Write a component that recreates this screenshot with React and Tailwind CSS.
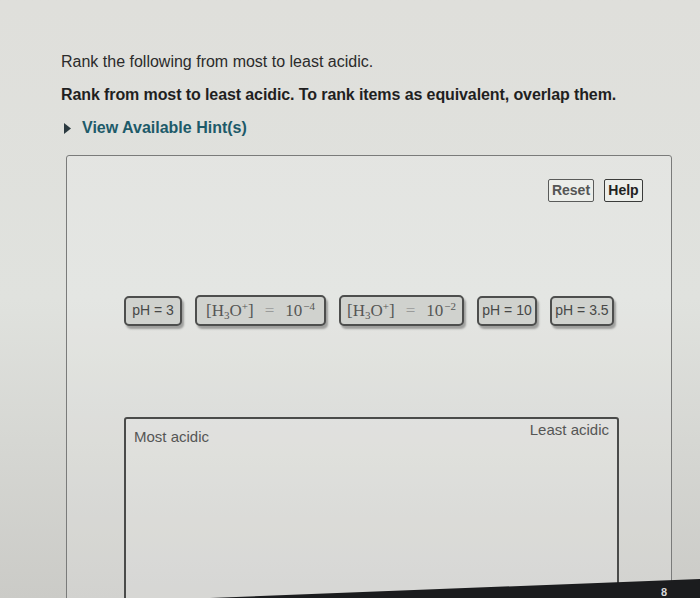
const sans = { fontFamily: '"Liberation Sans", Arial, sans-serif' };

function PhTile({ value, width }) {
  return (
    <div className={`flex h-[30px] ${width} items-center justify-center rounded-[5px] border-2 border-[#4d4e4d] bg-[#d0d2ce] text-[14px] text-[#474847] shadow-[2px_3px_2px_rgba(0,0,0,0.3)]`}>
      pH = {value}
    </div>
  );
}

function ConcTile({ exp, width }) {
  return (
    <div
      className={`flex h-[31px] ${width} items-center justify-center rounded-[5px] border-2 border-[#4d4e4d] bg-[#d0d2ce] text-[17px] text-[#555655] shadow-[2px_3px_2px_rgba(0,0,0,0.3)]`}
      style={{ fontFamily: '"Liberation Serif", "Times New Roman", serif' }}
    >
      <span>
        [H<sub className="text-[11px]">3</sub>O<sup className="text-[11px]">+</sup>]
      </span>
      <span className="mx-[11px] text-[#9a9b9a]">=</span>
      <span>
        10<sup className="ml-[1px] text-[11px]">−{exp}</sup>
      </span>
    </div>
  );
}

export default function App() {
  return (
    <div
      className="relative h-[598px] w-[700px] overflow-hidden bg-linear-to-b from-[#dfdfdb] via-[#e0e2de] to-[#cbcbc7]"
      style={sans}
    >
      <div className="pl-[61px] pt-[51px]">
        <p className="text-[16px] leading-[22px] text-[#2b2b2b]">Rank the following from most to least acidic.</p>
        <p className="mt-[11px] text-[16px] font-bold leading-[22px] tracking-[-0.1px] text-[#1f1f1f]">
          Rank from most to least acidic. To rank items as equivalent, overlap them.
        </p>
        <div className="mt-[11px] flex items-center gap-[11px] pl-[3px] text-[#1d5a69]">
          <svg width="7" height="11" viewBox="0 0 7 11">
            <path d="M0 0 L7 5.5 L0 11 Z" fill="#2b3a40" />
          </svg>
          <span className="text-[16px] font-bold leading-[22px]">View Available Hint(s)</span>
        </div>
      </div>

      <div className="ml-[66px] mt-[16px] h-[460px] w-[606px] rounded-[3px] border-[1.5px] border-[#7a7b7a] bg-white/15 pl-[57px] pr-[28px] pt-[23px]">
        <div className="flex justify-end gap-[10px]">
          <button className="h-[23px] w-[46px] rounded-[2px] border-[1.5px] border-[#5a5b5a] bg-[#eceeea] text-[14px] font-bold text-[#555655]">
            Reset
          </button>
          <button className="h-[23px] w-[39px] rounded-[2px] border-[1.5px] border-[#3a3b3a] bg-[#eceeea] text-[14px] font-bold text-[#222322]">
            Help
          </button>
        </div>

        <div className="mt-[93px] flex items-center gap-[13px]">
          <PhTile value="3" width="w-[58px]" />
          <ConcTile exp="4" width="w-[131px]" />
          <ConcTile exp="2" width="w-[125px]" />
          <PhTile value="10" width="w-[60px]" />
          <PhTile value="3.5" width="w-[64px]" />
        </div>

        <div className="mt-[91px] h-[200px] w-[495px] rounded-[3px] border-2 border-[#4a4b4a] bg-white/10 px-[8px] pt-0">
          <div className="flex justify-between text-[15px] text-[#555655]">
            <span className="pt-[7px]">Most acidic</span>
            <span>Least acidic</span>
          </div>
        </div>
      </div>

      <div className="absolute bottom-0 left-0 h-[19px] w-full bg-[#1b1c1e] [clip-path:polygon(30%_100%,100%_0,100%_100%)]" />
      <span className="absolute bottom-0 left-[661px] text-[11px] leading-[12px] font-bold text-[#d8d8d8]">8</span>
    </div>
  );
}
